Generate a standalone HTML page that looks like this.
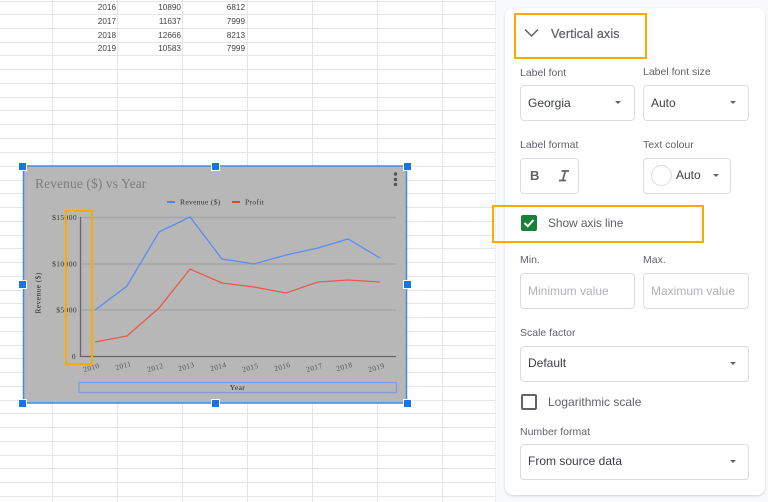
<!DOCTYPE html>
<html>
<head>
<meta charset="utf-8">
<style>
html,body{margin:0;padding:0;background:#fff}
#p{position:relative;width:768px;height:502px;overflow:hidden;background:#fff;font-family:"Liberation Sans",sans-serif;filter:blur(.35px)}
.a{position:absolute}
.l{position:absolute;font-size:10.5px;color:#5f6368;white-space:nowrap;line-height:12px}
.b{position:absolute;box-sizing:border-box;border:1px solid #dadce0;border-radius:4px;background:#fff}
.t{position:absolute;font-size:12px;color:#3c4043;white-space:nowrap;line-height:14px}
.c{position:absolute;font-size:8.2px;color:#444;text-align:right;width:40px;line-height:10px;font-family:"Liberation Sans",sans-serif}
.o{position:absolute;box-sizing:border-box;border:2px solid #f9ab00}
.h{position:absolute;width:7px;height:7px;background:#1a73e8;border:1px solid #fff}
.ar{position:absolute;width:0;height:0;border-left:3.5px solid transparent;border-right:3.5px solid transparent;border-top:3.5px solid #5f6368}
</style>
</head>
<body>
<div id="p">
<svg class="a" style="left:0;top:0" width="496" height="502">
<g stroke="#e6e6e6" stroke-width="1">
<path d="M0 1.500H496M0 14.500H496M0 28.500H496M0 42.500H496M0 55.500H496M0 69.500H496M0 83.500H496M0 97.500H496M0 110.500H496M0 124.500H496M0 138.500H496M0 152.500H496M0 166.500H496M0 180.500H496M0 193.500H496M0 207.500H496M0 221.500H496M0 235.500H496M0 248.500H496M0 262.500H496M0 276.500H496M0 290.500H496M0 303.500H496M0 317.500H496M0 331.500H496M0 345.500H496M0 358.500H496M0 372.500H496M0 386.500H496M0 400.500H496M0 413.500H496M0 427.500H496M0 441.500H496M0 455.500H496M0 468.500H496M0 482.500H496M0 496.500H496"/>
<path d="M52.500 0V502M117.500 0V502M182.500 0V502M247.500 0V502M312.500 0V502M377.500 0V502M442.500 0V502"/>
</g>
</svg>
<div class="c" style="left:76px;top:3px">2016</div><div class="c" style="left:141px;top:3px">10890</div><div class="c" style="left:205px;top:3px">6812</div>
<div class="c" style="left:76px;top:17px">2017</div><div class="c" style="left:141px;top:17px">11637</div><div class="c" style="left:205px;top:17px">7999</div>
<div class="c" style="left:76px;top:31px">2018</div><div class="c" style="left:141px;top:31px">12666</div><div class="c" style="left:205px;top:31px">8213</div>
<div class="c" style="left:76px;top:44px">2019</div><div class="c" style="left:141px;top:44px">10583</div><div class="c" style="left:205px;top:44px">7999</div>

<svg class="a" style="left:0;top:0" width="496" height="502" font-family="Liberation Serif,serif">
<rect x="23" y="166" width="384" height="237" fill="#b7b7b7"/>
<rect x="23.500" y="166" width="383" height="237" fill="none" stroke="#4a86e8" stroke-width="1.500"/>
<text x="35" y="188" font-size="13.500" fill="#7d7d7d" letter-spacing=".1">Revenue ($) vs Year</text>
<circle cx="395.500" cy="174" r="1.700" fill="#555"/><circle cx="395.500" cy="179.500" r="1.700" fill="#555"/><circle cx="395.500" cy="184.500" r="1.700" fill="#555"/>
<rect x="167" y="201" width="8" height="2" fill="#4a86e8"/>
<text x="180" y="204.500" font-size="7.500" fill="#333" letter-spacing=".35">Revenue ($)</text>
<rect x="232" y="201" width="8" height="2" fill="#ea4335"/>
<text x="245" y="204.500" font-size="7.500" fill="#333" letter-spacing=".35">Profit</text>
<path d="M80 217.500H396M80 264H396M80 310H396" stroke="#a5a5a5" stroke-width="1.500"/>
<path d="M80.500 217V356.500H396" stroke="#666" stroke-width="1.300" fill="none"/>
<g font-size="7.500" fill="#333" text-anchor="end" letter-spacing=".4">
<text x="77" y="220">$15000</text><text x="77" y="266.500">$10000</text><text x="77" y="312.500">$5000</text><text x="76" y="359">0</text>
</g>
<text transform="translate(40.500 293) rotate(-90)" font-size="7.500" fill="#222" text-anchor="middle" letter-spacing=".4">Revenue ($)</text>
<polyline points="95,310 127,286 159,232 190,217 222,259 254,264 286,255 318,248 348,239 380,258" fill="none" stroke="#5b8def" stroke-width="1.300"/>
<polyline points="95,342 127,336 159,308 190,269 222,283 254,287 286,293 318,282 348,280 380,282" fill="none" stroke="#e8594c" stroke-width="1.300"/>
<g font-size="7.500" fill="#555" text-anchor="middle" letter-spacing=".4">
<text transform="translate(92 370) rotate(-15)">2010</text>
<text transform="translate(124 368) rotate(-15)">2011</text>
<text transform="translate(156 370) rotate(-15)">2012</text>
<text transform="translate(187 369) rotate(-15)">2013</text>
<text transform="translate(219 369) rotate(-15)">2014</text>
<text transform="translate(251 370) rotate(-15)">2015</text>
<text transform="translate(283 369) rotate(-15)">2016</text>
<text transform="translate(315 370) rotate(-15)">2017</text>
<text transform="translate(345 369) rotate(-15)">2018</text>
<text transform="translate(377 370) rotate(-15)">2019</text>
</g>
<rect x="79" y="382.500" width="317.500" height="10" fill="none" stroke="#7c9fdc" stroke-width="1.300"/>
<text x="237.500" y="390" font-size="7.500" fill="#222" text-anchor="middle" letter-spacing=".4">Year</text>
</svg>

<div class="o" style="left:65px;top:210px;width:28px;height:155px;border-width:2.500px"></div>

<div class="h" style="left:18px;top:162px"></div>
<div class="h" style="left:210.500px;top:162px"></div>
<div class="h" style="left:402.500px;top:162px"></div>
<div class="h" style="left:18px;top:280px"></div>
<div class="h" style="left:402.500px;top:280px"></div>
<div class="h" style="left:18px;top:398.500px"></div>
<div class="h" style="left:210.500px;top:398.500px"></div>
<div class="h" style="left:402.500px;top:398.500px"></div>

<div class="a" style="left:495px;top:0;width:273px;height:502px;background:#f8f9fa;border-left:1px solid #eceef0;box-sizing:border-box"></div>
<div class="a" style="left:505px;top:8px;width:260px;height:487px;background:#fff;border-radius:8px;box-shadow:0 1px 2px rgba(60,64,67,.2)"></div>

<div class="o" style="left:514px;top:13px;width:133px;height:46px"></div>
<svg class="a" style="left:524px;top:28px" width="16" height="10"><path d="M1 1.500L7.500 8L14 1.500" fill="none" stroke="#5f6368" stroke-width="1.500"/></svg>
<div class="t" style="left:551px;top:27px;font-size:12.500px;color:#5f6368;-webkit-text-stroke:.25px #5f6368;letter-spacing:.15px">Vertical axis</div>

<div class="l" style="left:520px;top:67px">Label font</div>
<div class="l" style="left:643px;top:66px">Label font size</div>
<div class="b" style="left:520px;top:85px;width:115px;height:36px"></div>
<div class="t" style="left:528px;top:96px">Georgia</div>
<div class="ar" style="left:614.500px;top:101px"></div>
<div class="b" style="left:643px;top:85px;width:106px;height:36px"></div>
<div class="t" style="left:651px;top:96px">Auto</div>
<div class="ar" style="left:729.500px;top:101px"></div>

<div class="l" style="left:520px;top:139px">Label format</div>
<div class="l" style="left:643px;top:139px">Text colour</div>
<div class="b" style="left:520px;top:158px;width:59px;height:36px"></div>
<div class="t" style="left:530px;top:169px;font-size:13px;font-weight:bold;color:#5f6368">B</div>
<svg class="a" style="left:558px;top:170px" width="12" height="12"><path d="M3.500 1H11M1 10.500H8M7.300 1L4.700 10.500" fill="none" stroke="#5f6368" stroke-width="1.700"/></svg>
<div class="b" style="left:643px;top:158px;width:88px;height:36px"></div>
<div class="a" style="left:651px;top:165px;width:21px;height:21px;box-sizing:border-box;border:1px solid #dadce0;border-radius:50%"></div>
<div class="t" style="left:676px;top:168px">Auto</div>
<div class="ar" style="left:712.500px;top:174px"></div>

<div class="o" style="left:492px;top:205px;width:212px;height:38px"></div>
<div class="a" style="left:521px;top:215px;width:16px;height:16px;background:#188038;border-radius:2px"></div>
<svg class="a" style="left:521px;top:215px" width="16" height="16"><path d="M3.500 8L6.800 11.200L12.500 5" fill="none" stroke="#fff" stroke-width="2"/></svg>
<div class="t" style="left:548px;top:216px;color:#5f6368;letter-spacing:-.1px">Show axis line</div>

<div class="l" style="left:520px;top:254px">Min.</div>
<div class="l" style="left:643px;top:254px">Max.</div>
<div class="b" style="left:520px;top:273px;width:115px;height:36px"></div>
<div class="t" style="left:528px;top:284px;color:#b0b2b5">Minimum value</div>
<div class="b" style="left:643px;top:273px;width:106px;height:36px"></div>
<div class="t" style="left:651px;top:284px;color:#b0b2b5">Maximum value</div>

<div class="l" style="left:520px;top:327px">Scale factor</div>
<div class="b" style="left:520px;top:346px;width:229px;height:36px"></div>
<div class="t" style="left:528px;top:356px">Default</div>
<div class="ar" style="left:729.500px;top:362px"></div>

<div class="a" style="left:521px;top:394px;width:16px;height:16px;box-sizing:border-box;border:2px solid #5f6368;border-radius:2px"></div>
<div class="t" style="left:548px;top:395px;color:#5f6368">Logarithmic scale</div>

<div class="l" style="left:520px;top:426px">Number format</div>
<div class="b" style="left:520px;top:444px;width:229px;height:36px"></div>
<div class="t" style="left:528px;top:454px">From source data</div>
<div class="ar" style="left:729.500px;top:460px"></div>
</div>
</body>
</html>
